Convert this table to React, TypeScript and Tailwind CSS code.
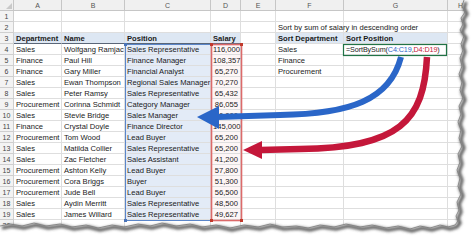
import type { FC } from 'react';

type Row = [string, string, string, string];

const cols = ['A', 'B', 'C', 'D', 'E', 'F', 'G', 'H'];
const widths = ['w-[14px]', 'w-[48px]', 'w-[63px]', 'w-[86px]', 'w-[30px]', 'w-[35px]', 'w-[68px]', 'w-[104px]', 'w-[26px]'];

const data: Row[] = [
    ['Sales', 'Wolfgang Ramjac', 'Sales Representative', '116,000'],
    ['Finance', 'Paul Hill', 'Finance Manager', '108,357'],
    ['Finance', 'Gary Miller', 'Financial Analyst', '65,270'],
    ['Sales', 'Ewan Thompson', 'Regional Sales Manager', '70,270'],
    ['Sales', 'Peter Ramsy', 'Sales Representative', '65,432'],
    ['Procurement', 'Corinna Schmidt', 'Category Manager', '86,055'],
    ['Sales', 'Stevie Bridge', 'Sales Manager', '90,000'],
    ['Finance', 'Crystal Doyle', 'Finance Director', '145,000'],
    ['Procurement', 'Tom Wood', 'Lead Buyer', '65,200'],
    ['Sales', 'Matilda Collier', 'Sales Representative', '65,200'],
    ['Sales', 'Zac Fletcher', 'Sales Assistant', '41,200'],
    ['Procurement', 'Ashton Kelly', 'Lead Buyer', '57,800'],
    ['Procurement', 'Cora Briggs', 'Buyer', '51,300'],
    ['Procurement', 'Jude Bell', 'Lead Buyer', '56,500'],
    ['Sales', 'Aydin Merritt', 'Sales Representative', '48,500'],
    ['Sales', 'James Willard', 'Sales Representative', '49,627'],
];

const sideF: Record<number, string> = { 2: 'Sort by sum of salary in descending order', 3: 'Sort Department', 4: 'Sales', 5: 'Finance', 6: 'Procurement' };

const cell = 'h-[11px] border-r border-b border-[#dedede] px-[2px] leading-[11px] whitespace-nowrap overflow-visible shrink-0';

const RowNum: FC<{ n: number }> = ({ n }) => (
    <div className={`${widths[0]} h-[11px] shrink-0 border-r border-b border-[#cfcfcf] bg-[#f3f3f3] text-center text-[7px] leading-[11px] text-[#444]`}>{n}</div>
);

const rightEdge: [number, number][] = [
    [464, 0], [462, 6], [465, 12], [461, 18], [463, 24], [460, 30], [464, 36], [461, 44], [463, 50], [460, 58], [462, 66], [459, 74],
    [462, 82], [460, 90], [463, 98], [459, 106], [461, 114], [458, 122], [461, 130], [459, 138], [462, 146], [458, 154], [460, 162],
    [457, 170], [460, 178], [458, 186], [461, 194], [457, 202], [459, 210], [456, 216], [458, 221], [455, 225],
];
const bottomEdge: [number, number][] = [
    [448, 227], [440, 225], [430, 228], [420, 226], [410, 229], [398, 226], [386, 228], [372, 225], [360, 227], [346, 224], [334, 227],
    [320, 225], [308, 228], [296, 226], [282, 227], [270, 224], [258, 227], [244, 225], [230, 228], [216, 225], [202, 227], [190, 224],
    [176, 226], [162, 223], [150, 226], [138, 224], [124, 227], [112, 225], [98, 228], [86, 225], [72, 227], [60, 224], [46, 226],
    [34, 223], [22, 226], [10, 224], [0, 226],
];
const edge = [...rightEdge, ...bottomEdge].map(([x, y]) => `${x},${y}`).join(' ');

const App: FC = () => {
    const rows = Array.from({ length: 21 }, (_, i) => i + 1);
    return (
        <div className="relative w-[474px] h-[244px] overflow-hidden bg-white font-['Liberation_Sans',Arial,sans-serif] text-[7.6px] text-[#1a1a1a]">
            {/* column letters */}
            <div className="flex">
                <div className={`${widths[0]} relative h-[11px] shrink-0 border-r border-b border-[#c6c6c6] bg-[#f0f0f0]`}>
                    <div className="absolute right-[1px] bottom-[1px] w-0 h-0 border-l-[6px] border-l-transparent border-b-[6px] border-b-[#c9c9c9]" />
                </div>
                {cols.map((c, i) => (
                    <div key={c} className={`${widths[i + 1]} h-[11px] shrink-0 border-r border-b border-[#c6c6c6] bg-[#f0f0f0] text-center text-[7px] leading-[11px] text-[#555]`}>{c}</div>
                ))}
            </div>

            {rows.map((n) => {
                const d = n >= 4 && n <= 19 ? data[n - 4] : null;
                const head = n === 3;
                const hb = head ? 'bg-[#dde7f3] font-bold' : '';
                const line = head ? 'border-b-[#5a6678]' : '';
                return (
                    <div key={n} className="flex">
                        <RowNum n={n} />
                        <div className={`${widths[1]} ${cell} ${hb} ${line}`}>{head ? 'Department' : d?.[0]}</div>
                        <div className={`${widths[2]} ${cell} ${hb} ${line}`}>{head ? 'Name' : d?.[1]}</div>
                        <div className={`${widths[3]} ${cell} ${head ? hb : d ? 'bg-[#e3ebf7]' : ''} ${line}`}>{head ? 'Position' : d?.[2]}</div>
                        <div className={`${widths[4]} ${cell} ${head ? hb : d ? 'bg-[#fdf6f6] text-right' : ''} ${line}`}>{head ? 'Salary' : d?.[3]}</div>
                        <div className={`${widths[5]} ${cell}`} />
                        <div className={`${widths[6]} ${cell} ${head ? 'bg-[#dde7f3] font-bold' : ''}`}>{sideF[n]}</div>
                        <div className={`${widths[7]} ${cell} ${head ? 'bg-[#dde7f3] font-bold' : ''}`}>
                            {head && 'Sort Position'}
                            {n === 4 && (
                                <span className="text-[7.2px] tracking-[-0.1px]">
                                    =SortBySum(<span className="text-[#2a66c8]">C4:C19</span>,<span className="text-[#c4173a]">D4:D19</span>)
                                </span>
                            )}
                        </div>
                        <div className={`${widths[8]} ${cell}`} />
                    </div>
                );
            })}

            {/* range highlights, arrows and torn paper edge */}
            <svg className="absolute left-0 top-0" width="474" height="244" viewBox="0 0 474 244">
                <defs>
                    <filter id="blur" x="-10%" y="-10%" width="120%" height="120%">
                        <feGaussianBlur stdDeviation="1.4" />
                    </filter>
                </defs>
                <rect x="125.5" y="44.5" width="86" height="176" fill="none" stroke="#5b86c9" strokeWidth="1" />
                <rect x="211.5" y="44.5" width="30" height="176" fill="none" stroke="#dc6a6a" strokeWidth="1.6" />
                <rect x="124" y="43" width="3" height="3" fill="#4a74b8" />
                <rect x="124" y="219" width="3" height="3" fill="#4a74b8" />
                <rect x="210" y="43" width="3" height="3" fill="#c0392b" />
                <rect x="240" y="43" width="3" height="3" fill="#c0392b" />
                <rect x="210" y="219" width="3" height="3" fill="#c0392b" />
                <rect x="240" y="219" width="3" height="3" fill="#c0392b" />
                <rect x="343.5" y="44.5" width="103" height="11" fill="none" stroke="#217346" strokeWidth="1.2" />

                <path d="M 401 57 C 390 100, 350 114, 280 115 L 217 117" fill="none" stroke="#2a66c8" strokeWidth="6" />
                <polygon points="197,117 219,106 219,129" fill="#2a66c8" />
                <path d="M 427 57 C 424 120, 400 148, 300 149 L 260 150" fill="none" stroke="#c4173a" strokeWidth="6.5" />
                <polygon points="243,150 262,141 262,159" fill="#c4173a" />

                <polygon points={`474,0 ${edge} 0,244 474,244`} fill="#ffffff" />
                <polyline points={edge} transform="translate(2 2)" fill="none" stroke="#4a4a4a" strokeWidth="3" filter="url(#blur)" />
                <polyline points={edge} fill="none" stroke="#7a7a7a" strokeWidth="0.8" />
            </svg>
        </div>
    );
};

export default App;
